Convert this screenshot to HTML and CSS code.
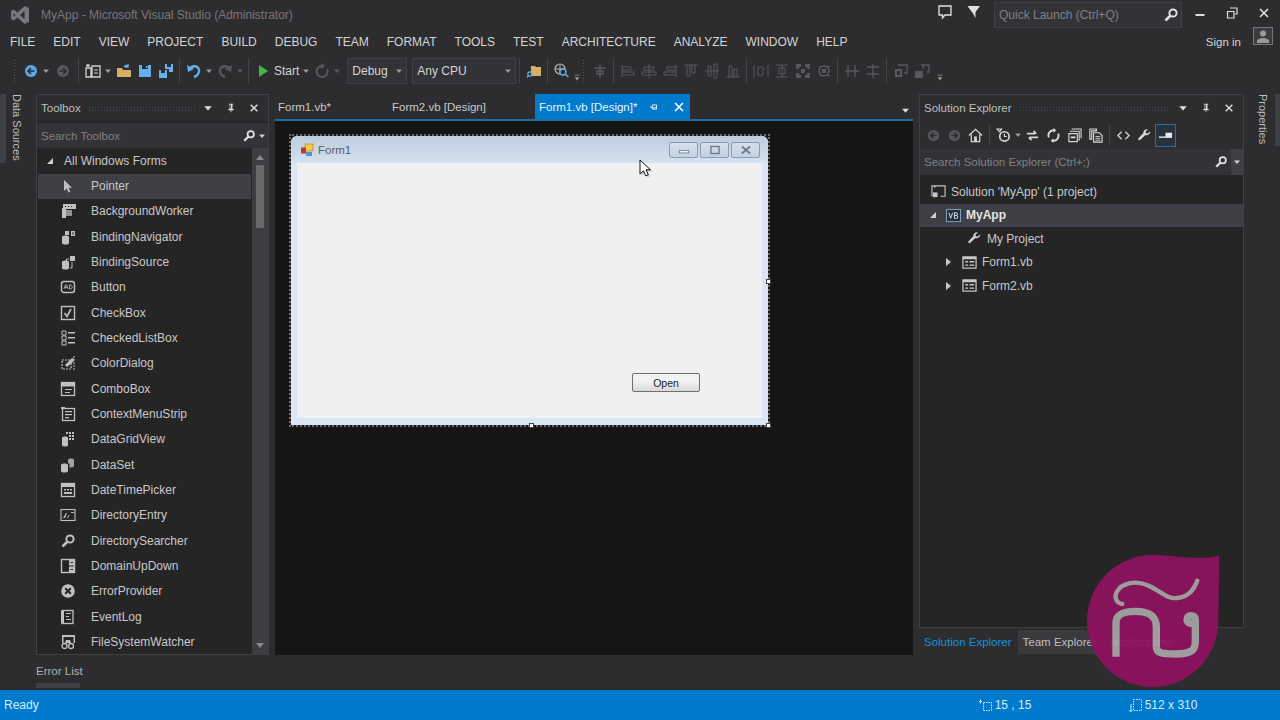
FILE: index.html
```html
<!DOCTYPE html>
<html lang="en">
<head>
  <meta charset="UTF-8" />
  <title>MyApp - Microsoft Visual Studio</title>
  <link rel="stylesheet" href="styles.css">
</head>
<body>
  <!-- icon sprite -->
  <svg class="sprite" xmlns="http://www.w3.org/2000/svg">
    <symbol id="drop" viewBox="0 0 8 8"><path d="M1 2.5h6L4 6z" fill="currentColor"/></symbol>
    <symbol id="overflow" viewBox="0 0 8 10"><path d="M1 1h6v1H1zM1 4h6L4 8z" fill="currentColor"/></symbol>
    <symbol id="pin" viewBox="0 0 12 14"><path d="M3 1h6v1H8v6l2 1v1H6.5v3h-1v-3H2V9l2-1V2H3zM5 2v6h1V2z" fill="currentColor"/></symbol>
    <symbol id="close" viewBox="0 0 12 12"><path d="M2 2l8 8M10 2l-8 8" stroke="currentColor" stroke-width="1.6" fill="none"/></symbol>
    <symbol id="search" viewBox="0 0 16 16"><circle cx="10" cy="6" r="3.6" fill="none" stroke="currentColor" stroke-width="2"/><path d="M7.5 8.5L2.5 13.5" stroke="currentColor" stroke-width="2.6"/></symbol>
    <symbol id="wrench" viewBox="0 0 16 16"><path d="M14 3.5l-2.6 2.4-1.8-.4-.4-1.8L11.6 1.5C9 .8 6.6 2.6 6.8 5.4L1.6 11c-.9 1 .6 2.7 1.7 1.7l5.4-5c2.9.6 5.8-1.4 5.3-4.2z" fill="currentColor"/></symbol>
    <symbol id="nav-back" viewBox="0 0 16 16"><circle cx="8" cy="8" r="6" fill="currentColor"/><path d="M11.5 8H6M8 5L5 8l3 3" stroke="#2d2d30" stroke-width="1.7" fill="none"/></symbol>
    <symbol id="nav-fwd" viewBox="0 0 16 16"><circle cx="8" cy="8" r="6" fill="currentColor"/><path d="M4.5 8H10M8 5l3 3-3 3" stroke="#2d2d30" stroke-width="1.7" fill="none"/></symbol>

    <!-- toolbox -->
    <symbol id="t-pointer" viewBox="0 0 16 16"><path d="M4 2v11l2.7-2.6 1.8 4 1.8-.8-1.8-3.8H12z" fill="currentColor"/></symbol>
    <symbol id="t-worker" viewBox="0 0 16 16"><path d="M3 1h13v5H6v9H2V5h1z" fill="currentColor"/><path d="M5 3h1v1H5zm3 0h1v1H8zm3 0h1v1h-1z" fill="#252526"/><path d="M6 7h6v6H6z" fill="currentColor" opacity=".7"/></symbol>
    <symbol id="t-bindnav" viewBox="0 0 16 16"><path d="M2 8c0-2 7-2 7 0v6c0 2-7 2-7 0z" fill="currentColor"/><path d="M5 2h4v4H5zM11 2h4v5h-4z" fill="currentColor"/><path d="M12.5 3h1v3h-1z" fill="#252526"/></symbol>
    <symbol id="t-bindsrc" viewBox="0 0 16 16"><path d="M2 8c0-2 7-2 7 0v6c0 2-7 2-7 0z" fill="currentColor"/><path d="M10 2h5v5h-5z" fill="currentColor"/><path d="M9 5H6.5v2M12 8v6h-2" stroke="currentColor" fill="none"/></symbol>
    <symbol id="t-button" viewBox="0 0 16 16"><rect x="1.5" y="2.5" width="13" height="11" rx="2.5" fill="none" stroke="currentColor" stroke-width="1.4"/><path d="M4 10l1.5-4h1L8 10M4.8 8.6h2.4M9.5 6v4h1.2c2 0 2-4 0-4z" stroke="currentColor" fill="none" stroke-width=".9"/></symbol>
    <symbol id="t-check" viewBox="0 0 16 16"><rect x="1.5" y="1.5" width="13" height="13" fill="none" stroke="currentColor" stroke-width="1.4"/><path d="M4.5 8l2.5 3.5L11 4" fill="none" stroke="currentColor" stroke-width="1.6"/></symbol>
    <symbol id="t-checklist" viewBox="0 0 16 16"><path d="M2 1h4v4H2zm0 5h4v4H2zm0 5h4v4H2z" fill="none" stroke="currentColor"/><path d="M8 2h7v1.6H8zm0 5h7v1.6H8zm0 5h7v1.6H8z" fill="currentColor"/></symbol>
    <symbol id="t-color" viewBox="0 0 16 16"><path d="M2 5h9v9H2z" fill="none" stroke="currentColor" stroke-dasharray="2 1" stroke-width="1.2"/><path d="M5 10l7-7 2 1-1 3-6 5z" fill="currentColor"/><path d="M14 1v14" stroke="currentColor" stroke-dasharray="2 1"/></symbol>
    <symbol id="t-combo" viewBox="0 0 16 16"><rect x="1.5" y="1.5" width="13" height="13" fill="none" stroke="currentColor" stroke-width="1.3"/><path d="M1.5 2h13v3.5h-13zM5 8h7v1H5zm0 3h5v1H5z" fill="currentColor"/></symbol>
    <symbol id="t-context" viewBox="0 0 16 16"><rect x="2.5" y="2.5" width="12" height="12" fill="none" stroke="currentColor" stroke-width="1.3"/><path d="M5 5h7v1.2H5zm0 3h7v1.2H5zm0 3h4v1.2H5zM1 1h4v2H1z" fill="currentColor"/></symbol>
    <symbol id="t-grid" viewBox="0 0 16 16"><path d="M2 7c0-2 6-2 6 0v7c0 2-6 2-6 0z" fill="currentColor"/><path d="M6 1h2v2H6zm3 0h2v2H9zm3 0h2v2h-2zM9 4h2v2H9zm3 0h2v2h-2zM9 7h2v2H9zm3 0h2v2h-2z" fill="currentColor"/></symbol>
    <symbol id="t-dataset" viewBox="0 0 16 16"><path d="M1 8c0-2 7-2 7 0v6c0 2-7 2-7 0z" fill="currentColor"/><path d="M8 3c0-2 6-2 6 0v6c0 1-2 1.500-4.500 1.500V7L8 6z" fill="currentColor" opacity=".8"/></symbol>
    <symbol id="t-date" viewBox="0 0 16 16"><rect x="1.500" y="1.500" width="13" height="13" fill="none" stroke="currentColor" stroke-width="1.300"/><path d="M2 2h12v3H2zM4 7h2v1.500H4zm3 0h2v1.500H7zm3 0h2v1.500h-2zM4 10h8v2H4z" fill="currentColor"/></symbol>
    <symbol id="t-direntry" viewBox="0 0 16 16"><rect x="1" y="2.500" width="14" height="11" fill="none" stroke="currentColor" stroke-width="1.100"/><path d="M3 11l3-5h1l-2 5zm4 0l1.500-3h1L8 11zM11 5h3v1h-3z" fill="currentColor"/></symbol>
    <symbol id="t-domain" viewBox="0 0 16 16"><rect x="1.500" y="1.500" width="13" height="13" fill="none" stroke="currentColor" stroke-width="1.400"/><path d="M9 1.500h5.500v6H9zm0 7h5.500v6H9z" fill="currentColor"/><path d="M10.500 4h2.500v1h-2.500zm0 7h2.500v1h-2.500z" fill="#252526"/></symbol>
    <symbol id="t-error" viewBox="0 0 16 16"><circle cx="8" cy="8" r="6.800" fill="currentColor"/><path d="M5.200 5.200l5.600 5.600M10.800 5.200l-5.600 5.600" stroke="#252526" stroke-width="2"/></symbol>
    <symbol id="t-log" viewBox="0 0 16 16"><rect x="2" y="1.500" width="11" height="13" fill="none" stroke="currentColor" stroke-width="1.300"/><path d="M1 2h3v12H1zM6 4h5v1H6zm0 3h3v1H6zm0 3h5v1H6z" fill="currentColor"/></symbol>
    <symbol id="t-watcher" viewBox="0 0 16 16"><path d="M2 1h13v8h-1.500V3h-10v6H2z" fill="currentColor"/><circle cx="4.500" cy="12" r="2.500" fill="none" stroke="currentColor" stroke-width="1.300"/><circle cx="11" cy="12" r="2.500" fill="none" stroke="currentColor" stroke-width="1.300"/><path d="M6 6h4l1 3H5z" fill="currentColor"/></symbol>

    <!-- toolbar alignment icons -->
    <symbol id="a-left" viewBox="0 0 16 16"><path d="M2 2v12M2 4h9v3H2M2 9h12v3H2" fill="none" stroke="currentColor"/></symbol>
    <symbol id="a-center" viewBox="0 0 16 16"><path d="M8 1v14M3 4h10v3H3zM1 9h14v3H1z" fill="none" stroke="currentColor"/></symbol>
    <symbol id="a-right" viewBox="0 0 16 16"><path d="M14 2v12M14 4H5v3h9M14 9H2v3h12" fill="none" stroke="currentColor"/></symbol>
    <symbol id="a-top" viewBox="0 0 16 16"><path d="M1 2h14M4 2v11h3V2M9 2v8h3V2" fill="none" stroke="currentColor"/></symbol>
    <symbol id="a-mid" viewBox="0 0 16 16"><path d="M1 8h14M4 3h3v10H4zM10 1h3v14h-3z" fill="none" stroke="currentColor"/></symbol>
    <symbol id="a-bot" viewBox="0 0 16 16"><path d="M1 14h14M4 14V3h3v11M9 14V6h3v8" fill="none" stroke="currentColor"/></symbol>
    <symbol id="a-hspace" viewBox="0 0 16 16"><path d="M1 2v12M15 2v12M5 4h5v8H5z" fill="none" stroke="currentColor"/></symbol>
    <symbol id="a-vspace" viewBox="0 0 16 16"><path d="M2 2h12M2 14h12M8 2v12M5 5h6v6H5z" fill="none" stroke="currentColor"/></symbol>
    <symbol id="a-size" viewBox="0 0 16 16"><path d="M1 1h5v3H4v2H1zM15 1h-5v3h2v2h3zM1 15h5v-3H4v-2H1zM15 15h-5v-3h2v-2h3zM6 6h4v4H6z" fill="currentColor"/></symbol>
    <symbol id="a-fit" viewBox="0 0 16 16"><circle cx="8" cy="8" r="5" fill="none" stroke="currentColor" stroke-width="1.500"/><path d="M3 3h11v1H3zM3 12h11v1H3zM6 6h4v4H6z" fill="currentColor"/></symbol>
    <symbol id="a-hcenter" viewBox="0 0 16 16"><path d="M4 2v12M11 2v12M1 8h14" fill="none" stroke="currentColor" stroke-width="1.300"/></symbol>
    <symbol id="a-vcenter" viewBox="0 0 16 16"><path d="M2 4h12M2 11h12M8 1v14" fill="none" stroke="currentColor" stroke-width="1.300"/></symbol>
    <symbol id="a-front" viewBox="0 0 16 16"><path d="M5 2h9v8h-3" fill="none" stroke="currentColor" stroke-width="1.300"/><path d="M2 6h7v8H2z" fill="currentColor"/><path d="M4 8h3v4H4z" fill="#2d2d30"/></symbol>
    <symbol id="a-back" viewBox="0 0 16 16"><path d="M7 2h8v7h-2M9 2v4" fill="none" stroke="currentColor" stroke-width="1.300"/><path d="M1 8h8v7H1z" fill="currentColor"/></symbol>
  </svg>

  <header class="titlebar">
    <svg class="vs-logo" viewBox="0 0 20 20"><path d="M14.500 1L19 3v14l-4.500 2-7-6.500L3.500 15.500 1 14V6l2.500-1.500 4 3zM14.500 6L10 10l4.500 4zM3.500 8v4l2-2z" fill="#77777b"/></svg>
    <span class="app-title">MyApp - Microsoft Visual Studio (Administrator)</span>
    <div class="title-right">
      <svg class="title-ic" viewBox="0 0 16 16"><path d="M2 2h12v9H8l-2.500 3v-3H2z" fill="none" stroke="#e0e0e0" stroke-width="1.300"/></svg>
      <svg class="title-ic" viewBox="0 0 16 16"><path d="M1.500 2H14L9.500 8v6L7 9.500z" fill="#e0e0e0"/></svg>
      <div class="quick">
        <span>Quick Launch (Ctrl+Q)</span>
        <svg class="quick-ic"><use href="#search"/></svg>
      </div>
      <div class="win-btns">
        <span class="win-btn"><svg viewBox="0 0 12 12"><path d="M1.500 7h9v2h-9z" fill="#e0e0e0"/></svg></span>
        <span class="win-btn"><svg viewBox="0 0 12 12"><path d="M4 1h7v6H9M1.500 4.500h6.500v6.500H1.500z" fill="none" stroke="#e0e0e0" stroke-width="1.200"/></svg></span>
        <span class="win-btn"><svg viewBox="0 0 12 12"><use href="#close" color="#e0e0e0"/></svg></span>
      </div>
    </div>
  </header>

  <nav class="menubar">
    <span>FILE</span><span>EDIT</span><span>VIEW</span><span>PROJECT</span><span>BUILD</span><span>DEBUG</span><span>TEAM</span><span>FORMAT</span><span>TOOLS</span><span>TEST</span><span>ARCHITECTURE</span><span>ANALYZE</span><span>WINDOW</span><span>HELP</span>
    <div class="signin">
      <span>Sign in</span>
      <svg class="avatar" viewBox="0 0 20 20"><rect x=".5" y=".5" width="19" height="17" fill="#3d3d40" stroke="#77777b"/><circle cx="10" cy="6.500" r="3" fill="#9a9a9a"/><path d="M4 16v-3l4-2h4l4 2v3z" fill="#9a9a9a"/></svg>
    </div>
  </nav>

  <div class="toolbar">
    <i class="grip"></i>
    <span class="tb"><svg class="blue"><use href="#nav-back"/></svg></span>
    <span class="tb-drop"><svg><use href="#drop"/></svg></span>
    <span class="tb tb-24 dim"><svg><use href="#nav-fwd"/></svg></span>
    <i class="sep"></i>
    <span class="tb"><svg viewBox="0 0 16 16"><path d="M1 5h5v9H1zM7 3h8v11H7zM3 1v3M1 2.500h4" fill="none" stroke="#d0d0d0" stroke-width="1.300"/><path d="M9 7h4M9 10h4" stroke="#d0d0d0"/></svg></span>
    <span class="tb-drop"><svg><use href="#drop"/></svg></span>
    <span class="tb"><svg viewBox="0 0 16 16"><path d="M1 5h5l1 2h8v7H1z" fill="#d8b062"/><path d="M8 4c1-2 3-2 4-1M12 1v3H9" fill="none" stroke="#6aaee6" stroke-width="1.300"/></svg></span>
    <span class="tb"><svg viewBox="0 0 16 16"><path d="M2 2h12v12H2z" fill="#67b0ec"/><path d="M5 2h6v4H5z" fill="#2d2d30"/><path d="M9 3h1.500v2H9z" fill="#67b0ec"/></svg></span>
    <span class="tb"><svg viewBox="0 0 16 16"><path d="M1 7h8v8H1z" fill="#67b0ec"/><path d="M7 1h8v8h-4V6H7z" fill="#67b0ec"/><path d="M9 1h4v3H9zM3 7h4v3H3z" fill="#2d2d30"/></svg></span>
    <i class="sep"></i>
    <span class="tb"><svg viewBox="0 0 16 16"><path d="M3 7c2-5 9-5 10 0 .7 3-2 6-5 7" fill="none" stroke="#67b0ec" stroke-width="2.400"/><path d="M1 2l1 7 6-3z" fill="#67b0ec"/></svg></span>
    <span class="tb-drop"><svg><use href="#drop"/></svg></span>
    <span class="tb dim"><svg viewBox="0 0 16 16"><path d="M13 7C11 2 4 2 3 7c-.7 3 2 6 5 7" fill="none" stroke="currentColor" stroke-width="2.400"/><path d="M15 2l-1 7-6-3z" fill="currentColor"/></svg></span>
    <span class="tb-drop dim"><svg><use href="#drop"/></svg></span>
    <i class="sep"></i>
    <span class="tb"><svg viewBox="0 0 16 16"><path d="M4 2l9 6-9 6z" fill="#43b649"/></svg></span>
    <span class="tb-label">Start</span>
    <span class="tb-drop"><svg><use href="#drop"/></svg></span>
    <span class="tb dim"><svg viewBox="0 0 16 16"><path d="M8 3a5.500 5.500 0 1 0 5 3" fill="none" stroke="currentColor" stroke-width="2"/><path d="M7 0l4 3-4 3z" fill="currentColor"/></svg></span>
    <span class="tb-drop dim"><svg><use href="#drop"/></svg></span>
    <div class="combo combo-debug"><span>Debug</span><svg><use href="#drop"/></svg></div>
    <div class="combo combo-cpu"><span>Any CPU</span><svg><use href="#drop"/></svg></div>
    <i class="sep"></i>
    <span class="tb"><svg viewBox="0 0 16 16"><path d="M5 3h4l1 1h5v9H5z" fill="#d8b062"/><circle cx="4" cy="11" r="2.200" fill="none" stroke="#6aaee6" stroke-width="1.200"/><path d="M2.500 12.500L1 14.500" stroke="#6aaee6" stroke-width="1.300"/></svg></span>
    <i class="sep"></i>
    <span class="tb"><svg viewBox="0 0 16 16"><circle cx="6" cy="6" r="5" fill="none" stroke="#b8b8b8" stroke-width="1.200"/><path d="M1 6h10M6 1v10" stroke="#b8b8b8"/><circle cx="9" cy="9" r="3" fill="#2d2d30" stroke="#6aaee6" stroke-width="1.300"/><path d="M11 11l3.500 3" stroke="#6aaee6" stroke-width="1.500"/></svg></span>
    <span class="tb-drop tb-low"><svg><use href="#overflow"/></svg></span>
    <i class="grip"></i>
    <div class="dim-group">
      <span class="tb"><svg viewBox="0 0 16 16"><path d="M8 1v14M2 5h12M5 8h6v3H5z" fill="none" stroke="currentColor" stroke-width="1.300"/></svg></span>
      <i class="sep"></i>
      <span class="tb"><svg><use href="#a-left"/></svg></span>
      <span class="tb"><svg><use href="#a-center"/></svg></span>
      <span class="tb"><svg><use href="#a-right"/></svg></span>
      <span class="tb"><svg><use href="#a-top"/></svg></span>
      <span class="tb"><svg><use href="#a-mid"/></svg></span>
      <span class="tb"><svg><use href="#a-bot"/></svg></span>
      <i class="sep"></i>
      <span class="tb"><svg><use href="#a-hspace"/></svg></span>
      <span class="tb"><svg><use href="#a-vspace"/></svg></span>
      <span class="tb"><svg><use href="#a-size"/></svg></span>
      <span class="tb"><svg><use href="#a-fit"/></svg></span>
      <i class="sep"></i>
      <span class="tb"><svg><use href="#a-hcenter"/></svg></span>
      <span class="tb"><svg><use href="#a-vcenter"/></svg></span>
      <i class="sep"></i>
      <span class="tb"><svg><use href="#a-front"/></svg></span>
      <span class="tb"><svg><use href="#a-back"/></svg></span>
    </div>
    <span class="tb-drop tb-low tb-last"><svg><use href="#overflow"/></svg></span>
  </div>

  <main class="workspace">
    <!-- левая полоса -->
    <div class="side-strip">
      <span class="side-tab">Data Sources</span>
    </div>

    <!-- Toolbox -->
    <section class="panel toolbox">
      <div class="panel-head">
        <span>Toolbox</span>
        <i class="head-dots"></i>
        <svg class="head-ic"><use href="#drop"/></svg>
        <svg class="head-ic"><use href="#pin"/></svg>
        <svg class="head-ic"><use href="#close"/></svg>
      </div>
      <div class="search search-toolbox">
        <span>Search Toolbox</span>
        <svg class="search-ic"><use href="#search"/></svg>
        <svg class="search-drop"><use href="#drop"/></svg>
      </div>
      <div class="toolbox-body">
        <div class="tool-list">
          <div class="tool-group"><i class="arrow-open"></i>All Windows Forms</div>
          <div class="tool selected"><svg><use href="#t-pointer"/></svg>Pointer</div>
          <div class="tool"><svg><use href="#t-worker"/></svg>BackgroundWorker</div>
          <div class="tool"><svg><use href="#t-bindnav"/></svg>BindingNavigator</div>
          <div class="tool"><svg><use href="#t-bindsrc"/></svg>BindingSource</div>
          <div class="tool"><svg><use href="#t-button"/></svg>Button</div>
          <div class="tool"><svg><use href="#t-check"/></svg>CheckBox</div>
          <div class="tool"><svg><use href="#t-checklist"/></svg>CheckedListBox</div>
          <div class="tool"><svg><use href="#t-color"/></svg>ColorDialog</div>
          <div class="tool"><svg><use href="#t-combo"/></svg>ComboBox</div>
          <div class="tool"><svg><use href="#t-context"/></svg>ContextMenuStrip</div>
          <div class="tool"><svg><use href="#t-grid"/></svg>DataGridView</div>
          <div class="tool"><svg><use href="#t-dataset"/></svg>DataSet</div>
          <div class="tool"><svg><use href="#t-date"/></svg>DateTimePicker</div>
          <div class="tool"><svg><use href="#t-direntry"/></svg>DirectoryEntry</div>
          <div class="tool"><svg><use href="#search"/></svg>DirectorySearcher</div>
          <div class="tool"><svg><use href="#t-domain"/></svg>DomainUpDown</div>
          <div class="tool"><svg><use href="#t-error"/></svg>ErrorProvider</div>
          <div class="tool"><svg><use href="#t-log"/></svg>EventLog</div>
          <div class="tool"><svg><use href="#t-watcher"/></svg>FileSystemWatcher</div>
        </div>
        <div class="scrollbar">
          <i class="sb-up"></i>
          <i class="sb-thumb"></i>
          <i class="sb-down"></i>
        </div>
      </div>
    </section>

    <!-- Документы -->
    <section class="documents">
      <div class="doc-tabs">
        <span class="doc-tab tab-form1">Form1.vb*</span>
        <span class="doc-tab tab-form2">Form2.vb [Design]</span>
        <span class="doc-tab active">Form1.vb [Design]*
          <svg class="tab-pin" viewBox="0 0 12 12"><path d="M1 6h3M4 3.500h5v5H4zM4 7h5" fill="none" stroke="#fff"/></svg>
          <svg class="tab-close"><use href="#close"/></svg>
        </span>
        <svg class="tabs-drop"><use href="#drop"/></svg>
      </div>
      <div class="canvas">
        <div class="selection">
          <div class="form-window">
            <div class="form-title">
              <svg class="form-ic" viewBox="0 0 14 14"><rect x="5" y="1" width="8" height="7" fill="#f2c94c" stroke="#b08a2a" stroke-width=".7"/><rect x="1" y="4.500" width="5" height="6" fill="#c0392b"/><rect x="6" y="9" width="6" height="4" fill="#5a8fcf"/></svg>
              <span>Form1</span>
              <div class="caption-btns">
                <span class="cap-btn"><svg viewBox="0 0 12 8"><rect x="2" y="4.500" width="8" height="2" fill="#f5f7fa" stroke="#6d7a88" stroke-width=".7"/></svg></span>
                <span class="cap-btn"><svg viewBox="0 0 12 8"><rect x="2.500" y="1" width="7" height="6" fill="none" stroke="#6d7a88" stroke-width="1.200"/></svg></span>
                <span class="cap-btn"><svg viewBox="0 0 12 8"><path d="M2.500 1l7 6M9.500 1l-7 6" stroke="#6d7a88" stroke-width="1.600"/></svg></span>
              </div>
            </div>
            <div class="form-client">
              <button class="form-button">Open</button>
            </div>
          </div>
          <i class="handle h-right"></i>
          <i class="handle h-bottom"></i>
          <i class="handle h-corner"></i>
        </div>
      </div>
    </section>

    <!-- Solution Explorer -->
    <div class="solution-col">
      <section class="panel solution">
        <div class="panel-head">
          <span>Solution Explorer</span>
          <i class="head-dots"></i>
          <svg class="head-ic"><use href="#drop"/></svg>
          <svg class="head-ic"><use href="#pin"/></svg>
          <svg class="head-ic"><use href="#close"/></svg>
        </div>
        <div class="sol-tools">
          <span class="st dim"><svg><use href="#nav-back"/></svg></span>
          <span class="st dim"><svg><use href="#nav-fwd"/></svg></span>
          <span class="st"><svg viewBox="0 0 16 16"><path d="M1 8l7-6.500L15 8M3.500 7v7.500h9V7" fill="none" stroke="#d8d8d8" stroke-width="1.300"/><path d="M6.500 9h3v5.500h-3z" fill="#d8d8d8"/></svg></span>
          <i class="sep"></i>
          <span class="st"><svg viewBox="0 0 16 16"><circle cx="9" cy="9" r="5" fill="none" stroke="#d8d8d8" stroke-width="1.800"/><path d="M9 6v3h2.500M1 1h5L4 4z" fill="none" stroke="#d8d8d8" stroke-width="1.200"/></svg></span>
          <span class="st-drop"><svg><use href="#drop"/></svg></span>
          <span class="st"><svg viewBox="0 0 16 16"><path d="M2 6h9M9 3l3 3M14 10H5M7 13l-3-3" fill="none" stroke="#d8d8d8" stroke-width="1.700"/></svg></span>
          <span class="st"><svg viewBox="0 0 16 16"><path d="M3 10a5.500 5.500 0 0 1 6-7.500M13 6a5.500 5.500 0 0 1-6 7.500" fill="none" stroke="#d8d8d8" stroke-width="2"/><path d="M8 0v5l3-2.500zM8 16v-5l-3 2.500z" fill="#d8d8d8"/></svg></span>
          <span class="st"><svg viewBox="0 0 16 16"><path d="M5 1h10v10M3 3.500h10v10M2 6h9v8.500H2z" fill="none" stroke="#d8d8d8" stroke-width="1.200"/><path d="M4 9h5v2H4z" fill="#d8d8d8"/></svg></span>
          <span class="st"><svg viewBox="0 0 16 16"><path d="M2 1h7v2H4v9H2zM6 5h6l3 3v7H6z" fill="none" stroke="#d8d8d8" stroke-width="1.200"/><path d="M8 9h5M8 11h5M8 13h5" stroke="#d8d8d8"/></svg></span>
          <i class="sep"></i>
          <span class="st"><svg viewBox="0 0 16 16"><path d="M6 4L2 8l4 4M10 4l4 4-4 4" fill="none" stroke="#d8d8d8" stroke-width="1.300"/></svg></span>
          <span class="st"><svg><use href="#wrench"/></svg></span>
          <span class="st st-on"><svg viewBox="0 0 16 16"><path d="M8 5h7v5H8z" fill="#e8e8e8"/><path d="M1 9h14v1.500H1z" fill="#e8e8e8"/></svg></span>
        </div>
        <div class="search search-solution">
          <span>Search Solution Explorer (Ctrl+;)</span>
          <svg class="search-ic"><use href="#search"/></svg>
          <svg class="search-drop"><use href="#drop"/></svg>
        </div>
        <div class="tree">
          <div class="node lvl-0">
            <svg viewBox="0 0 16 16"><path d="M1 13V2h14v11h-5M4 2v2" fill="none" stroke="#c8c8c8" stroke-width="1.200"/><path d="M2 9h5v5H2z" fill="#c8c8c8"/></svg>
            <span>Solution 'MyApp' (1 project)</span>
          </div>
          <div class="node lvl-1 selected">
            <i class="arrow-open"></i>
            <svg class="vb" viewBox="0 0 16 16"><rect x=".5" y="1.500" width="15" height="13" fill="#26303a" stroke="#7fa6c8"/><path d="M3 5l2 6 2-6M9 5v6h2.500c1.500 0 1.500-3 0-3H9h2c1.500 0 1.500-3 0-3z" fill="none" stroke="#d4e2ee" stroke-width="1"/></svg>
            <b>MyApp</b>
          </div>
          <div class="node lvl-2">
            <svg><use href="#wrench"/></svg>
            <span>My Project</span>
          </div>
          <div class="node lvl-3">
            <i class="arrow-closed"></i>
            <svg viewBox="0 0 16 16"><rect x="1" y="2" width="14" height="12" fill="none" stroke="#c8c8c8" stroke-width="1.300"/><path d="M1 2h14v2.500H1zM3.500 6.500h3v1.500h-3zM3.500 10h3v1.500h-3zM8 6.500h5V8H8zM8 10h5v1.500H8z" fill="#c8c8c8"/></svg>
            <span>Form1.vb</span>
          </div>
          <div class="node lvl-3">
            <i class="arrow-closed"></i>
            <svg viewBox="0 0 16 16"><rect x="1" y="2" width="14" height="12" fill="none" stroke="#c8c8c8" stroke-width="1.300"/><path d="M1 2h14v2.500H1zM3.500 6.500h3v1.500h-3zM3.500 10h3v1.500h-3zM8 6.500h5V8H8zM8 10h5v1.500H8z" fill="#c8c8c8"/></svg>
            <span>Form2.vb</span>
          </div>
        </div>
      </section>
      <div class="sol-tabs">
        <span class="sol-tab current">Solution Explorer</span>
        <span class="sol-tab hover">Team Explorer</span>
        <span class="sol-tab">Notifications</span>
      </div>
    </div>

    <div class="side-strip right">
      <span class="side-tab">Properties</span>
    </div>
  </main>

  <div class="errorbar">
    <span>Error List</span>
    <i class="error-mark"></i>
  </div>

  <footer class="statusbar">
    <span class="status-ready">Ready</span>
    <div class="status-cell cell-pos">
      <svg viewBox="0 0 14 14"><path d="M4.500 4.500h8v8h-8z" fill="none" stroke="#cfe6f7" stroke-dasharray="1.500 1"/><path d="M0 3.500h3M1.500 1.500v4" stroke="#cfe6f7"/></svg>
      <span>15 , 15</span>
    </div>
    <div class="status-cell cell-size">
      <svg viewBox="0 0 14 14"><path d="M4.500 1.500h8v11h-8z" fill="none" stroke="#cfe6f7" stroke-dasharray="1.500 1"/><path d="M0 13h3.500M2 6v7" stroke="#cfe6f7"/></svg>
      <span>512 x 310</span>
    </div>
  </footer>

  <!-- курсор и водяной знак поверх всего -->
  <svg class="cursor" viewBox="0 0 14 20"><path d="M2.500 2.500v14l3.500-3 2.300 5 2.700-1.200-2.300-4.800h4.800z" fill="#999" opacity=".5"/><path d="M1 1v14l3.500-3.200 2.300 5 2.500-1.100-2.300-4.900h4.500z" fill="#fff" stroke="#111" stroke-width="1"/></svg>

  <svg class="watermark" viewBox="80 45 396 396">
    <path d="M278 45C340 45 410 62 477 48L474 240A197 198 0 1 1 278 45Z" fill="#8f1260"/>
    <g fill="none" stroke="#a6a6a6" stroke-linecap="round">
      <path d="M186 192C168 190 160 172 170 155C182 130 225 120 260 135C300 152 320 178 350 174C385 170 400 150 411 122" stroke-width="13"/>
      <path d="M167 350V250C167 222 190 214 225 214C262 214 288 224 288 262V320C288 342 310 342 345 342C385 342 405 335 405 305V238C405 222 380 224 380 238C380 250 395 254 405 246" stroke-width="22" stroke-linecap="butt"/>
    </g>
  </svg>
</body>
</html>
```

FILE: styles.css
```css
:root {
  --bg: #2d2d30;
  --panel: #252526;
  --line: #3f3f46;
  --text: #c8c8c8;
  --menu: #d4d4d4;
  --muted: #7a7a7e;
  --accent: #007acc;
  --disabled: #58585c;
}

* {
  box-sizing: border-box;
}

body {
  margin: 0;
  width: 1280px;
  height: 720px;
  overflow: hidden;
  position: relative;
  background: var(--bg);
  color: var(--text);
  font-family: "Liberation Sans", Arial, sans-serif;
  font-size: 12px;
}

i {
  display: block;
}

.sprite {
  position: absolute;
  width: 0;
  height: 0;
}

/* Заголовок окна */
.titlebar {
  height: 30px;
  display: flex;
  align-items: center;
  padding-left: 10px;
}

.vs-logo {
  width: 20px;
  height: 20px;
}

.app-title {
  margin-left: 11px;
  color: #77777b;
  font-size: 12px;
}

.title-right {
  margin-left: auto;
  display: flex;
  align-items: center;
}

.title-ic {
  width: 16px;
  height: 16px;
  margin-right: 13px;
  margin-top: -6px;
}

.quick {
  width: 188px;
  height: 26px;
  border: 1px solid var(--line);
  background: #333337;
  margin-left: -1px;
  display: flex;
  align-items: center;
  justify-content: space-between;
  padding: 0 2px 0 4px;
  color: #808084;
}

.quick-ic {
  width: 16px;
  height: 16px;
  color: #e0e0e0;
}

.win-btns {
  display: flex;
  margin-left: 2px;
  margin-top: -4px;
}

.win-btn {
  width: 32px;
  display: flex;
  justify-content: center;
}

.win-btn svg {
  width: 12px;
  height: 12px;
}

/* Меню */
.menubar {
  height: 24px;
  display: flex;
  align-items: center;
  gap: 18px;
  padding-left: 10px;
  color: var(--menu);
}

.signin {
  margin-left: auto;
  display: flex;
  align-items: center;
  gap: 12px;
  padding-right: 7px;
  font-size: 11.5px;
}

.avatar {
  width: 20px;
  height: 20px;
  margin-top: -10px;
}

/* Панель инструментов */
.toolbar {
  height: 34px;
  display: flex;
  align-items: center;
  padding-left: 13px;
}

.grip {
  width: 4px;
  height: 24px;
  margin-right: 3px;
  background-image: radial-gradient(#55555a 1px, transparent 1px);
  background-size: 3px 3px;
}

.sep {
  width: 1px;
  height: 26px;
  margin: 0 3px;
  background: #434346;
}

.tb {
  width: 21px;
  height: 28px;
  display: flex;
  align-items: center;
  justify-content: center;
  color: #d0d0d0;
}

.tb svg {
  width: 16px;
  height: 16px;
}

.tb-24 {
  width: 24px;
}

.tb-drop {
  width: 10px;
  display: flex;
  justify-content: center;
  color: #9a9a9a;
}

.tb-drop svg {
  width: 8px;
  height: 8px;
}

.tb-low {
  margin-top: 14px;
}

.tb-last {
  margin-left: 3px;
}

.tb.blue, .blue {
  color: #5aa9ea;
}

.dim,
.tb.dim,
.tb-drop.dim,
.dim-group .tb {
  color: var(--disabled);
}

.dim-group {
  display: flex;
  align-items: center;
}

.tb-label {
  margin: 0 2px 0 1px;
  color: var(--menu);
}

.combo {
  height: 26px;
  margin-left: 5px;
  border: 1px solid var(--line);
  background: #333337;
  display: flex;
  align-items: center;
  justify-content: space-between;
  padding: 0 3px 0 4px;
  color: var(--menu);
}

.combo svg {
  width: 8px;
  height: 8px;
  color: #9a9a9a;
}

.combo-debug {
  width: 60px;
}

.combo-cpu {
  width: 104px;
}

/* Рабочая область */
.workspace {
  margin-top: 6px;
  height: 561px;
  display: flex;
}

.side-strip {
  width: 36px;
  display: flex;
  align-items: flex-start;
  flex: none;
}

.side-tab {
  writing-mode: vertical-rl;
  border-left: 6px solid var(--line);
  padding-left: 5px;
  height: 69px;
  font-size: 11px;
  white-space: nowrap;
  color: #bdbdbd;
}

.side-strip.right {
  justify-content: flex-end;
}

.side-strip.right .side-tab {
  border-left: 0;
  border-right: 5px solid var(--line);
  padding-right: 6px;
  padding-left: 0;
  height: 52px;
}

.panel {
  background: var(--panel);
  border: 1px solid var(--line);
  display: flex;
  flex-direction: column;
}

.panel-head {
  height: 26px;
  flex: none;
  display: flex;
  align-items: center;
  padding-left: 4px;
  background: var(--bg);
  font-size: 11.5px;
  color: #bdbdbd;
}

.head-dots {
  flex: 1;
  height: 5px;
  margin: 0 8px 0 7px;
  background-image: radial-gradient(#46464a 1px, transparent 1px);
  background-size: 3px 3px;
}

.head-ic {
  width: 10px;
  height: 10px;
  margin-right: 13px;
  color: #e0e0e0;
}

.head-ic:last-child {
  margin-right: 9px;
}

/* Toolbox */
.toolbox {
  width: 233px;
  flex: none;
}

.search {
  flex: none;
  display: flex;
  align-items: center;
  background: #333337;
  color: #808084;
  font-size: 11.5px;
  position: relative;
}

.search-ic {
  width: 14px;
  height: 14px;
  margin-left: auto;
  color: #e0e0e0;
}

.search-drop {
  width: 8px;
  height: 8px;
  margin: 0 2px 0 2px;
  color: #d0d0d0;
}

.search-toolbox {
  height: 25px;
  padding-left: 4px;
  margin-top: 2px;
}

.toolbox-body {
  flex: 1;
  min-height: 0;
  display: flex;
  overflow: hidden;
}

.tool-list {
  flex: 1;
  padding: 0 1px;
  overflow: hidden;
}

.tool-group {
  height: 24.5px;
  display: flex;
  align-items: center;
  padding-left: 9px;
  margin-top: 1px;
  color: var(--text);
}

.arrow-open {
  width: 0;
  height: 0;
  border-style: solid;
  border-width: 0 0 6px 6px;
  border-color: transparent transparent #d0d0d0 transparent;
  margin-right: 11px;
}

.arrow-closed {
  width: 0;
  height: 0;
  border-style: solid;
  border-width: 4px 0 4px 5px;
  border-color: transparent transparent transparent #c8c8c8;
}

.tool {
  height: 25.33px;
  display: flex;
  align-items: center;
  padding-left: 22px;
  gap: 15px;
  color: var(--text);
}

.tool svg {
  width: 16px;
  height: 16px;
  flex: none;
  color: #c0c0c0;
}

.tool.selected {
  background: var(--line);
}

.scrollbar {
  width: 16px;
  flex: none;
  background: #3e3e42;
  display: flex;
  flex-direction: column;
  align-items: center;
  padding: 7px 0 6px;
}

.sb-up,
.sb-down {
  width: 0;
  height: 0;
  border-style: solid;
  border-color: transparent;
}

.sb-up {
  border-width: 0 4.500px 5px;
  border-bottom-color: #8a8a8e;
}

.sb-down {
  margin-top: auto;
  border-width: 5px 4.500px 0;
  border-top-color: #8a8a8e;
}

.sb-thumb {
  width: 8px;
  height: 63px;
  margin-top: 5px;
  background: #686868;
}

/* Документы */
.documents {
  width: 638px;
  flex: none;
  margin-left: 6px;
  display: flex;
  flex-direction: column;
}

.doc-tabs {
  height: 25px;
  flex: none;
  display: flex;
  align-items: stretch;
  position: relative;
}

.doc-tab {
  display: flex;
  align-items: center;
  padding-left: 3px;
  color: var(--text);
  font-size: 11.5px;
}

.tab-form1 {
  width: 114px;
}

.tab-form2 {
  width: 146px;
}

.doc-tab.active {
  width: 155px;
  padding-left: 4px;
  background: var(--accent);
  color: #e8f4fc;
}

.tab-pin {
  width: 10px;
  height: 10px;
  margin-left: 12px;
}

.tab-close {
  width: 12px;
  height: 12px;
  margin-left: 14px;
  color: #fff;
}

.tabs-drop {
  width: 9px;
  height: 9px;
  position: absolute;
  right: 3px;
  top: 12px;
  color: #e0e0e0;
}

.canvas {
  flex: 1;
  min-height: 0;
  border-top: 2px solid #1c6ea4;
  background: #151515;
  padding: 13px 0 0 14px;
}

.selection {
  width: 481px;
  height: 293px;
  border: 2px dotted #6c6c6c;
  position: relative;
}

.form-window {
  height: 100%;
  display: flex;
  flex-direction: column;
  border-radius: 6px 6px 0 0;
  background: #d9e6f3;
  padding: 0 6px 7px;
}

.form-title {
  height: 27px;
  flex: none;
  margin: 0 -6px;
  padding: 0 8px 0 9px;
  border-radius: 6px 6px 0 0;
  background: linear-gradient(#bccddc, #d5e2ef);
  display: flex;
  align-items: center;
  color: #56606b;
  font-size: 11.5px;
}

.form-ic {
  width: 14px;
  height: 14px;
  margin-right: 4px;
}

.caption-btns {
  margin-left: auto;
  display: flex;
  gap: 2px;
}

.cap-btn {
  width: 29px;
  height: 16px;
  border: 1px solid #8a9cb0;
  border-radius: 2px;
  background: linear-gradient(#d4dfea, #c3d2e0);
  display: flex;
  align-items: center;
  justify-content: center;
}

.cap-btn svg {
  width: 14px;
  height: 10px;
}

.form-client {
  flex: 1;
  background: #f0f0f0;
  position: relative;
}

.form-button {
  position: absolute;
  left: 335px;
  top: 210px;
  width: 68px;
  height: 19px;
  padding: 0;
  border: 1px solid #707070;
  border-radius: 2px;
  background: linear-gradient(#f2f2f2 45%, #d8d8d8);
  color: #222;
  font: 10.500px "Liberation Sans", Arial, sans-serif;
}

.handle {
  position: absolute;
  width: 5px;
  height: 5px;
  background: #fff;
  border: 1px solid #444;
}

.h-right {
  right: -3px;
  top: 143px;
}

.h-bottom {
  left: 238px;
  bottom: -3px;
}

.h-corner {
  right: -3px;
  bottom: -3px;
}

/* Solution Explorer */
.solution-col {
  width: 325px;
  flex: none;
  margin-left: 6px;
  display: flex;
  flex-direction: column;
}

.solution {
  flex: 1;
  min-height: 0;
}

.sol-tools {
  height: 28px;
  flex: none;
  display: flex;
  align-items: center;
  background: var(--bg);
  padding-left: 3px;
}

.st {
  width: 21px;
  height: 23px;
  display: flex;
  align-items: center;
  justify-content: center;
  color: #d8d8d8;
}

.st.dim {
  color: var(--disabled);
}

.st svg {
  width: 15px;
  height: 15px;
}

.st-drop {
  width: 8px;
  display: flex;
  color: #9a9a9a;
}

.st-drop svg {
  width: 8px;
  height: 8px;
}

.st-on {
  border: 1px solid #2f6f9f;
  background: #26323c;
}

.solution .sep {
  height: 22px;
}

.search-solution {
  height: 26px;
  padding-left: 4px;
}

.search-solution .search-drop {
  width: 12px;
  margin: 0;
  padding: 0 2px;
  height: 26px;
  background: #3f3f46;
  margin-left: 3px;
}

.tree {
  flex: 1;
  padding-top: 5px;
}

.node {
  height: 23.500px;
  display: flex;
  align-items: center;
  color: var(--text);
}

.node svg {
  width: 15px;
  height: 15px;
  flex: none;
  color: #c8c8c8;
}

.node span,
.node b {
  margin-left: 5px;
}

.lvl-0 {
  padding-left: 11px;
}

.lvl-1 {
  padding-left: 10px;
}

.lvl-1 .arrow-open {
  margin-right: 10px;
}

.lvl-1.selected {
  background: var(--line);
}

.lvl-1 b {
  color: #e4e4e4;
}

.lvl-2 {
  padding-left: 47px;
}

.lvl-3 {
  padding-left: 26px;
}

.lvl-3 svg {
  margin-left: 11px;
}

.sol-tabs {
  height: 27px;
  flex: none;
  display: flex;
  align-items: center;
  font-size: 11.500px;
}

.sol-tab {
  height: 24px;
  display: flex;
  align-items: center;
  padding: 0 5px;
  color: #bdbdbd;
}

.sol-tab.current {
  color: #1b8fdc;
  margin-right: 1px;
}

.sol-tab.hover {
  background: #3a3a3d;
  margin-right: 3px;
}

/* Низ */
.errorbar {
  height: 35px;
  padding: 10px 0 0 36px;
  font-size: 11.500px;
  color: #b0b0b0;
}

.error-mark {
  width: 44px;
  height: 5px;
  margin-top: 6px;
  background: #3f3f46;
}

.statusbar {
  height: 30px;
  background: var(--accent);
  display: flex;
  align-items: center;
  padding-left: 4px;
  color: #d6ecfa;
  position: relative;
}

.status-cell {
  display: flex;
  align-items: center;
  gap: 2px;
}

.status-cell svg {
  width: 14px;
  height: 14px;
}

.cell-pos {
  margin-left: 940px;
  width: 150px;
}

.cell-size {
  margin-left: 0;
}

.cursor {
  position: absolute;
  left: 639px;
  top: 159px;
  width: 14px;
  height: 20px;
}

.watermark {
  position: absolute;
  left: 1087px;
  top: 555px;
  width: 132px;
  height: 132px;
  opacity: 0.93;
}
```
